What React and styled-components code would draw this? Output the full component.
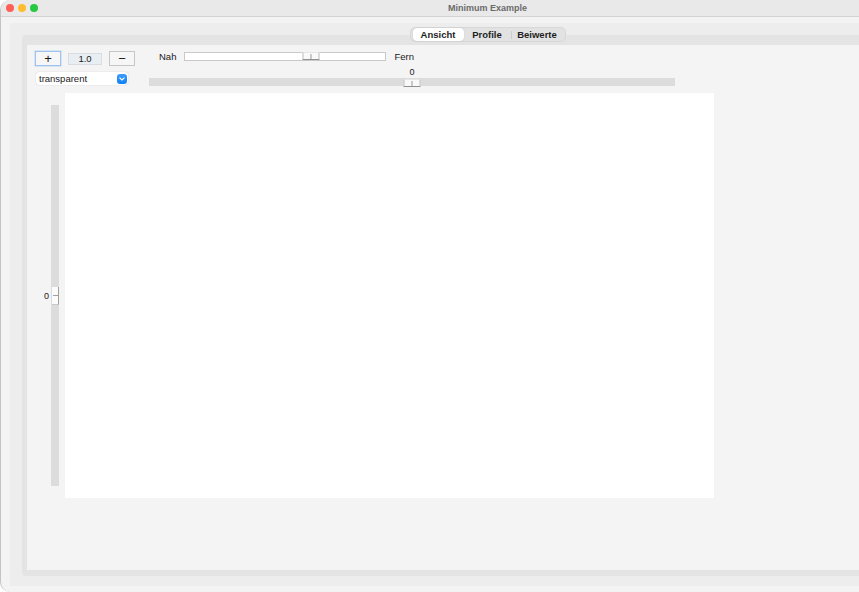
import React from 'react';
import styled, { createGlobalStyle } from 'styled-components';

const GlobalStyle = createGlobalStyle`
  html, body {
    margin: 0;
    padding: 0;
    background: #ffffff;
    overflow: hidden;
  }
  body {
    font-family: "Liberation Sans", Arial, sans-serif;
  }
`;

const Window = styled.div`
  width: 974px;
  height: 592px;
  display: flex;
  flex-direction: column;
  background: #f3f3f3;
  border-left: 1px solid #c4c4c4;
  border-radius: 10px;
  box-sizing: border-box;
  overflow: hidden;
`;

const TitleBar = styled.div`
  height: 16px;
  flex: none;
  position: relative;
  display: flex;
  align-items: center;
  justify-content: center;
  background: #e9e9e9;
  border-bottom: 1px solid #d3d3d3;
`;

const Lights = styled.div`
  position: absolute;
  left: 5px;
  top: 4px;
  display: flex;
  gap: 4px;
`;

const Light = styled.span`
  width: 8px;
  height: 8px;
  border-radius: 50%;
  background: ${p => p.$color};
`;

const Title = styled.span`
  font-size: 9px;
  font-weight: bold;
  color: #6b6b6b;
`;

const Body = styled.div`
  flex: 1;
  display: flex;
  padding: 6px 9px 6px 9px;
  min-height: 0;
`;

const Panel = styled.div`
  flex: 1;
  display: flex;
  flex-direction: column;
  background: #ededed;
  padding: 4px 12px 10px 12px;
`;

const TabBar = styled.div`
  position: relative;
  z-index: 1;
  display: flex;
  justify-content: center;
  margin-bottom: -7px;
`;

const TabGroup = styled.div`
  display: flex;
  align-items: center;
  height: 15px;
  box-sizing: border-box;
  padding: 0 2px;
  background: #e2e2e2;
  border: 1px solid #d8d8d8;
  border-radius: 5px;
`;

const Tab = styled.div`
  height: 13px;
  width: ${p => p.$w}px;
  display: flex;
  align-items: center;
  justify-content: center;
  font-size: 9.5px;
  font-weight: bold;
  color: #1e1e1e;
  border-radius: 4px;
  background: ${p => (p.$active ? '#ffffff' : 'transparent')};
  box-shadow: ${p => (p.$active ? '0 0 1px rgba(0,0,0,0.25)' : 'none')};
`;

const TabSep = styled.span`
  width: 1px;
  height: 8px;
  background: #cdcdcd;
`;

const Pane = styled.div`
  flex: 1;
  display: flex;
  flex-direction: column;
  background: #f4f4f4;
  border-style: solid;
  border-color: #e4e4e4;
  border-width: 10px 5px 6px 5px;
  border-radius: 4px;
  padding: 6px 0 0 8px;
`;

const TopRow = styled.div`
  display: flex;
  gap: 14px;
`;

const LeftControls = styled.div`
  width: 100px;
  display: flex;
  flex-direction: column;
  gap: 6px;
`;

const ButtonRow = styled.div`
  display: flex;
  align-items: center;
  gap: 7px;
`;

const StepButton = styled.button`
  width: 26px;
  height: 15px;
  padding: 0;
  display: flex;
  align-items: center;
  justify-content: center;
  font-family: "Liberation Sans", Arial, sans-serif;
  font-size: 13px;
  line-height: 1;
  color: #1a1a1a;
  background: #f6f6f6;
  border: 1px solid ${p => (p.$focused ? '#9fc3ee' : '#c6c6c6')};
  box-shadow: ${p => (p.$focused ? '0 0 0 0.5px #b9d4f4' : 'none')};
`;

const ValueField = styled.div`
  width: 34px;
  height: 12px;
  box-sizing: border-box;
  display: flex;
  align-items: center;
  justify-content: center;
  font-size: 9.5px;
  color: #1a1a1a;
  background: #e9eef3;
  border: 1px solid #d9dde2;
`;

const Select = styled.div`
  width: 92px;
  height: 13px;
  margin-left: 1px;
  box-sizing: border-box;
  display: flex;
  align-items: center;
  justify-content: space-between;
  padding: 0 1px 0 3px;
  font-size: 9.5px;
  color: #1a1a1a;
  background: #ffffff;
  border-radius: 3px;
  box-shadow: 0 0 1px rgba(0,0,0,0.3);
`;

const SelectArrow = styled.span`
  width: 10px;
  height: 10px;
  display: flex;
  align-items: center;
  justify-content: center;
  border-radius: 3px;
  background: linear-gradient(#3c9dfd, #1180f5);
`;

const RightControls = styled.div`
  display: flex;
  flex-direction: column;
`;

const RangeRow = styled.div`
  display: flex;
  align-items: center;
  height: 11px;
  padding-left: 10px;
  font-size: 9.5px;
  color: #1a1a1a;
`;

const RangeTrack = styled.div`
  position: relative;
  width: 202px;
  height: 9px;
  margin: 0 8px;
  box-sizing: border-box;
  background: #ffffff;
  border: 1px solid #c9c9c9;
`;

const ValueLabel = styled.div`
  width: 526px;
  height: 13px;
  margin-top: 3px;
  position: relative;
  font-size: 9px;
  color: #1a1a1a;
`;

const LabelAt = styled.span`
  position: absolute;
  top: 2px;
  transform: translateX(-50%);
`;

const WideTrack = styled.div`
  position: relative;
  width: 526px;
  height: 8px;
  background: #dcdcdc;
`;

const HThumb = styled.div`
  position: absolute;
  top: ${p => p.$top}px;
  width: 17px;
  height: 8px;
  transform: translateX(-50%);
  box-sizing: border-box;
  background: #f9f9f9;
  border: 1px solid #bdbdbd;
  border-top-color: #e6e6e6;
  border-bottom-color: #8f8f8f;
  &::after {
    content: '';
    position: absolute;
    left: 7px;
    top: 1px;
    bottom: 0;
    width: 1px;
    background: #9a9a9a;
  }
`;

const MainRow = styled.div`
  display: flex;
  gap: 6px;
  margin-top: 7px;
`;

const SideColumn = styled.div`
  width: 24px;
  display: flex;
  justify-content: flex-end;
  align-items: center;
`;

const VTrack = styled.div`
  position: relative;
  width: 8px;
  height: 381px;
  background: #dcdcdc;
`;

const VThumb = styled.div`
  position: absolute;
  left: 1px;
  top: 50%;
  width: 7px;
  height: 18px;
  transform: translateY(-50%);
  box-sizing: border-box;
  background: #fbfbfb;
  border-right: 1px solid #a0a0a0;
  border-bottom: 1px solid #c8c8c8;
  &::after {
    content: '';
    position: absolute;
    left: 1px;
    right: 0;
    top: 8px;
    height: 1px;
    background: #a0a0a0;
  }
`;

const VLabel = styled.span`
  position: absolute;
  right: 10px;
  top: 50%;
  transform: translateY(-50%);
  font-size: 9px;
  color: #1a1a1a;
`;

const Canvas = styled.div`
  width: 649px;
  height: 405px;
  background: #ffffff;
`;

const Chevron = () => (
  <svg width="6" height="4" viewBox="0 0 6 4">
    <path d="M0.8 0.8 L3 3 L5.2 0.8" fill="none" stroke="#fff" strokeWidth="1.1" strokeLinecap="round" strokeLinejoin="round" />
  </svg>
);

export default function App() {
  return (
    <>
      <GlobalStyle />
      <Window>
        <TitleBar>
          <Lights>
            <Light $color="#fe5f57" />
            <Light $color="#febc2e" />
            <Light $color="#28c840" />
          </Lights>
          <Title>Minimum Example</Title>
        </TitleBar>
        <Body>
          <Panel>
            <TabBar>
              <TabGroup>
                <Tab $active $w={51}>Ansicht</Tab>
                <Tab $w={47}>Profile</Tab>
                <TabSep />
                <Tab $w={51}>Beiwerte</Tab>
              </TabGroup>
            </TabBar>
            <Pane>
              <TopRow>
                <LeftControls>
                  <ButtonRow>
                    <StepButton $focused>+</StepButton>
                    <ValueField>1.0</ValueField>
                    <StepButton>−</StepButton>
                  </ButtonRow>
                  <Select>
                    transparent
                    <SelectArrow><Chevron /></SelectArrow>
                  </Select>
                </LeftControls>
                <RightControls>
                  <RangeRow>
                    Nah
                    <RangeTrack>
                      <HThumb $top={-1} style={{ left: '63%' }} />
                    </RangeTrack>
                    Fern
                  </RangeRow>
                  <ValueLabel>
                    <LabelAt style={{ left: '50%' }}>0</LabelAt>
                  </ValueLabel>
                  <WideTrack>
                    <HThumb $top={1} style={{ left: '50%' }} />
                  </WideTrack>
                </RightControls>
              </TopRow>
              <MainRow>
                <SideColumn>
                  <VTrack>
                    <VThumb />
                    <VLabel>0</VLabel>
                  </VTrack>
                </SideColumn>
                <Canvas />
              </MainRow>
            </Pane>
          </Panel>
        </Body>
      </Window>
    </>
  );
}
